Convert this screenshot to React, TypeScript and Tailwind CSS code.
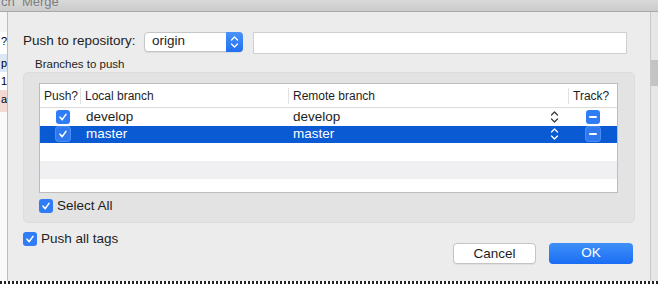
import React from "react";

const font = { fontFamily: '"Liberation Sans", Arial, sans-serif' };

function Check({ dim = false }: { dim?: boolean }) {
  return (
    <span
      className={
        "flex h-[14px] w-[14px] items-center justify-center rounded-[3px] " +
        (dim ? "bg-[#2f78ee] shadow-[0_0_0_1px_#4d8ef5]" : "bg-[#2f7cf6]")
      }
    >
      <svg width="10" height="10" viewBox="0 0 10 10">
        <path d="M2 5.2 L4.2 7.6 L8 2.4" fill="none" stroke="white" strokeWidth="1.6" strokeLinecap="round" strokeLinejoin="round" />
      </svg>
    </span>
  );
}

function Minus({ dim = false }: { dim?: boolean }) {
  return (
    <span
      className={
        "flex h-[14px] w-[14px] items-center justify-center rounded-[3px] " +
        (dim ? "bg-[#2f78ee] shadow-[0_0_0_1px_#4d8ef5]" : "bg-[#2f7cf6]")
      }
    >
      <span className="h-[2px] w-[8px] rounded-sm bg-white" />
    </span>
  );
}

function Chevrons({ color }: { color: string }) {
  return (
    <svg width="9" height="14" viewBox="0 0 9 14">
      <path d="M1.5 5 L4.5 2 L7.5 5 M1.5 9 L4.5 12 L7.5 9" fill="none" stroke={color} strokeWidth="1.3" strokeLinecap="round" strokeLinejoin="round" />
    </svg>
  );
}

const rows = [
  { local: "develop", remote: "develop", selected: false },
  { local: "master", remote: "master", selected: true },
];

export default function App() {
  return (
    <div className="flex h-[284px] w-[658px] flex-col overflow-hidden bg-[#d4d4d4] text-[13px] text-[#1e1e1e]" style={font}>
      {/* title strip behind the sheet */}
      <div className="relative h-[12px] shrink-0 overflow-hidden border-b border-[#a9a9a9] bg-gradient-to-b from-[#d9d9d9] to-[#cbcbcb]">
        <span className="absolute -top-[8px] left-[1px] text-[13px] text-[#7d7d7d]">ch&nbsp;&nbsp;Merge</span>
      </div>
      <div className="flex min-h-0 flex-1">
        {/* app content peeking on the left */}
        <div className="flex w-[8px] shrink-0 flex-col border-r border-[#bdbdbd] bg-white text-[11px] leading-[19px] text-black">
          <div className="h-[20px] bg-[#f4f4f4]" />
          <div className="h-[22px] overflow-hidden pl-[1px]">?</div>
          <div className="h-[18px] overflow-hidden bg-[#dde6f3] pl-[1px]">p</div>
          <div className="h-[18px] overflow-hidden pl-[1px]">1</div>
          <div className="h-[22px] overflow-hidden bg-[#f2d9d4] pl-[1px]">a</div>
          <div className="flex-1 bg-[#fafafa]" />
        </div>
        {/* sheet */}
        <div className="flex w-[643px] shrink-0 flex-col border-r border-[#c9c9c9] bg-[#ececec] px-[15px] pt-[18px]">
          <div className="flex h-[23px] items-center">
            <span className="w-[121px] text-[13.5px] text-[#1e1e1e]">Push to repository:</span>
            <div className="flex h-[20px] w-[99px] items-center rounded-[4px] border border-[#c6c6c6] bg-white shadow-[0_1px_1px_rgba(0,0,0,0.08)]">
              <span className="flex-1 pl-[7px] text-[13.5px] text-[#1e1e1e]">origin</span>
              <span className="-mr-px flex h-[20px] w-[17px] items-center justify-center rounded-r-[4px] bg-gradient-to-b from-[#4a93f8] to-[#1f6ff1]">
                <Chevrons color="white" />
              </span>
            </div>
            <div className="ml-[10px] mt-[3px] h-[22px] w-[374px] border border-[#cfcfcf] bg-white" />
          </div>
          <div className="mt-[5px] pl-[12px] text-[11.5px] leading-[13px] text-[#1e1e1e]">Branches to push</div>
          <div className="mt-[1px] flex h-[151px] flex-col rounded-[5px] border border-[#dcdcdc] bg-[#e3e3e3] px-[15px] pt-[10px]">
            <div className="flex h-[110px] w-[579px] shrink-0 flex-col overflow-hidden border border-[#bdbdbd] bg-white">
              <div className="flex h-[24px] shrink-0 items-center border-b border-[#dcdcdc] text-[12px] text-[#1e1e1e]">
                <span className="w-[41px] border-r border-[#e2e2e2] pl-[4px] leading-[16px]">Push?</span>
                <span className="w-[208px] border-r border-[#e2e2e2] pl-[4px] leading-[16px]">Local branch</span>
                <span className="w-[280px] border-r border-[#e2e2e2] pl-[4px] leading-[16px]">Remote branch</span>
                <span className="pl-[4px] leading-[16px]">Track?</span>
              </div>
              {rows.map((r) => (
                <div
                  key={r.local}
                  className={
                    "flex h-[17.5px] shrink-0 items-center text-[13.5px] " +
                    (r.selected ? "bg-[#0a5ad4] text-white" : "text-[#1e1e1e]")
                  }
                >
                  <span className="flex w-[41px] justify-center pl-[4px]">
                    <Check dim={r.selected} />
                  </span>
                  <span className="w-[208px] pl-[5px]">{r.local}</span>
                  <span className="flex w-[280px] items-center justify-between pl-[4px] pr-[10px]">
                    {r.remote}
                    <Chevrons color={r.selected ? "white" : "#3a3a3a"} />
                  </span>
                  <span className="flex flex-1 justify-center">
                    <Minus dim={r.selected} />
                  </span>
                </div>
              ))}
              <div className="h-[18px] shrink-0 bg-white" />
              <div className="h-[18px] shrink-0 bg-[#f0f0f2]" />
              <div className="flex-1 bg-white" />
            </div>
            <div className="mt-[5px] flex h-[16px] items-center gap-[4px]">
              <Check />
              <span className="text-[13.5px] leading-[16px] text-[#1e1e1e]">Select All</span>
            </div>
          </div>
          <div className="mt-[8px] flex h-[16px] items-center gap-[4px]">
            <Check />
            <span className="text-[13.5px] leading-[16px] text-[#1e1e1e]">Push all tags</span>
          </div>
          <div className="-mt-[4px] flex justify-end gap-[13px] pr-[2px]">
            <button className="h-[21px] w-[83px] rounded-[4px] border border-[#c4c4c4] bg-white text-[13.5px] text-[#1e1e1e] shadow-[0_1px_1px_rgba(0,0,0,0.06)]">
              Cancel
            </button>
            <button className="h-[21px] w-[84px] rounded-[4px] bg-gradient-to-b from-[#3f8ff8] to-[#1a6df4] text-[13.5px] text-white">
              OK
            </button>
          </div>
        </div>
        {/* right edge with scrollbar */}
        <div className="flex flex-1 flex-col bg-[#e6e6e6]">
          <div className="h-[48px]" />
          <div className="h-[26px] bg-[#c4c4c4]" />
        </div>
      </div>
      <div className="h-[3px] shrink-0 bg-white" style={{ backgroundImage: "repeating-linear-gradient(90deg,#222 0 2px,#fff 2px 4px)" }} />
    </div>
  );
}
